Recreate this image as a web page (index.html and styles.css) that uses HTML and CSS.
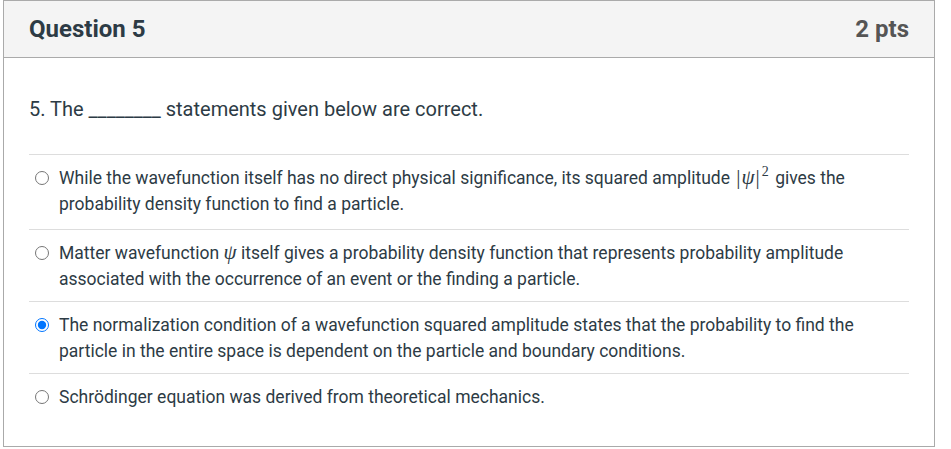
FILE: index.html
```html
<!DOCTYPE html>
<html>
<head>
<meta charset="utf-8">
<link rel="stylesheet" href="styles.css">
</head>
<body>
<div class="card">
  <div class="header">
    <span class="title">Question 5</span>
    <span class="pts">2 pts</span>
  </div>
  <div class="body">
    <p class="question">5. The ________ statements given below are correct.</p>
    <div class="answers">
      <label class="answer answer-math">
        <input type="radio" name="q5">
        <span class="text">While the wavefunction itself has no direct physical significance, its squared amplitude <span class="math math-abs"><span class="bar">|</span><i>ψ</i><span class="bar">|</span><sup>2</sup></span> gives the probability density function to find a particle.</span>
      </label>
      <label class="answer">
        <input type="radio" name="q5">
        <span class="text">Matter wavefunction <span class="math"><i>ψ</i></span> itself gives a probability density function that represents probability amplitude associated with the occurrence of an event or the finding a particle.</span>
      </label>
      <label class="answer">
        <input type="radio" name="q5" checked>
        <span class="text">The normalization condition of a wavefunction squared amplitude states that the probability to find the particle in the entire space is dependent on the particle and boundary conditions.</span>
      </label>
      <label class="answer">
        <input type="radio" name="q5">
        <span class="text">Schrödinger equation was derived from theoretical mechanics.</span>
      </label>
    </div>
  </div>
</div>
</body>
</html>
```
FILE: styles.css
```css
html, body {
  margin: 0;
  padding: 0;
  background: #fff;
}
body {
  font-family: Roboto, "Liberation Sans", sans-serif;
  color: #2d3b45;
}
.card {
  margin-left: 3px;
  width: 930px;
  height: 445px;
  border: 1px solid #aaaaaa;
}
.header {
  display: flex;
  justify-content: space-between;
  align-items: center;
  height: 56px;
  background: #f4f4f4;
  border-bottom: 1px solid #aaaaaa;
  padding: 0 25px 0 25px;
}
.title {
  font-size: 24px;
  font-weight: 700;
  color: #2d3b45;
}
.pts {
  font-size: 24px;
  font-weight: 700;
  color: #555;
}
.body {
  padding: 0 25px;
}
.question {
  margin: 0;
  padding-top: 37px;
  padding-bottom: 31px;
  font-size: 20px;
  line-height: 28px;
}
.answers {
  display: flex;
  flex-direction: column;
}
.answer {
  display: flex;
  align-items: flex-start;
  border-top: 1px solid #dddddd;
  padding: 10px 0 9px;
  font-size: 17.5px;
  line-height: 26px;
}
.answer-math {
  padding-bottom: 12px;
}
.answer input {
  margin: 6px 10px 0 6px;
  width: 14px;
  height: 14px;
  flex: none;
}
.text {
  flex: 1;
  padding-right: 42px;
}
.math {
  font-family: "Liberation Serif", serif;
  font-size: 21px;
  line-height: 0;
}
.math i {
  font-style: italic;
}
.math-abs {
  padding: 0 2px;
}
.math-abs i {
  padding: 0 1px;
}
.math sup {
  font-size: 14px;
  line-height: 0;
  vertical-align: 8px;
  padding-left: 2px;
}
.bar {
  font-style: normal;
}
```
